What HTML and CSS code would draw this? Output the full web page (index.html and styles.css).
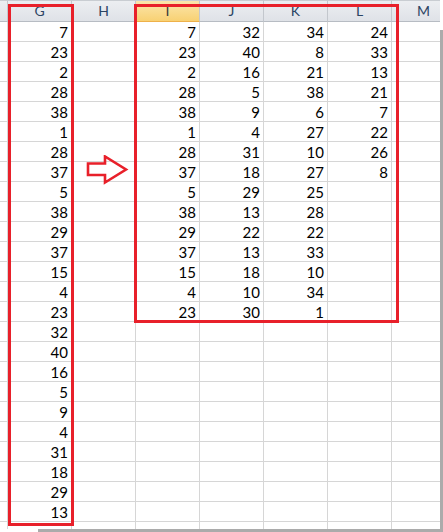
FILE: index.html
```html
<!DOCTYPE html>
<html>
<head>
<meta charset="utf-8">
<link rel="stylesheet" href="styles.css">
</head>
<body>
<div class="sheet">
  <div class="grid" id="grid"></div>
  <div class="box box-g"></div>
  <div class="box box-il"></div>
  <svg class="arrow" width="44" height="32" viewBox="0 0 44 32">
    <path d="M2 8.5 H19 V1.5 L40 14.5 L19 27.5 V20 H2 Z" fill="none" stroke="#e8202a" stroke-width="2.6" stroke-linejoin="miter"/>
  </svg>
</div>
<div class="shadow-right"></div>
<div class="shadow-bottom"></div>
<script>
const G=[7,23,2,28,38,1,28,37,5,38,29,37,15,4,23,32,40,16,5,9,4,31,18,29,13];
const I=[7,23,2,28,38,1,28,37,5,38,29,37,15,4,23];
const J=[32,40,16,5,9,4,31,18,29,13,22,13,18,10,30];
const K=[34,8,21,38,6,27,10,27,25,28,22,33,10,34,1];
const L=[24,33,13,21,7,22,26,8];
const grid=document.getElementById('grid');
const heads=['','G','H','I','J','K','L','M'];
heads.forEach((h,i)=>{const d=document.createElement('div');d.className='hd'+(h==='I'?' sel':'')+(i===0?' edge':'');d.textContent=h;grid.appendChild(d);});
for(let r=0;r<26;r++){
  const vals=['',G[r],'',I[r],J[r],K[r],L[r],''];
  vals.forEach((v,i)=>{const d=document.createElement('div');d.className='cell'+(i===0?' edge':'');d.textContent=(v===undefined?'':v);grid.appendChild(d);});
}
</script>
</body>
</html>
```
FILE: styles.css
```css
html, body { margin: 0; padding: 0; background: #ffffff; }
body { width: 443px; height: 532px; overflow: hidden; position: relative; }
.sheet {
  position: relative;
  width: 440px;
  height: 529px;
  overflow: hidden;
  background: #fff;
}
.grid {
  display: grid;
  grid-template-columns: 8px repeat(7, 64px);
  grid-template-rows: 22px;
  grid-auto-rows: 20px;
  font-family: Lato, "Liberation Sans", sans-serif;
}
.hd {
  box-sizing: border-box;
  background: linear-gradient(#eceef1, #dfe2e7);
  border-right: 1px solid #c3c7cd;
  border-bottom: 1px solid #b7bcc3;
  border-top: 1px solid #c9cdd2;
  color: #2b4463;
  font-size: 14px;
  text-align: center;
  line-height: 20px;
}
.hd.sel {
  background: linear-gradient(#fbe6ad, #f8d173);
  border-bottom: 1px solid #eeb14a;
  color: #3a3a3a;
}
.cell {
  box-sizing: border-box;
  border-right: 1px solid #d6d6d6;
  border-bottom: 1px solid #d6d6d6;
  font-size: 15px;
  line-height: 20px;
  text-align: right;
  padding-right: 3px;
  color: #000;
}
.box {
  position: absolute;
  border: 3px solid #e8202a;
  box-sizing: border-box;
}
.box-g { left: 8px; top: 4px; width: 66px; height: 522px; }
.box-il { left: 134px; top: 4px; width: 265px; height: 319px; }
.arrow { position: absolute; left: 86px; top: 155px; }
.shadow-right {
  position: absolute; left: 440px; top: 30px; width: 3px; height: 502px; background: #ababab;
}
.shadow-bottom {
  position: absolute; left: 38px; top: 529px; width: 405px; height: 3px; background: #ababab;
}
```
